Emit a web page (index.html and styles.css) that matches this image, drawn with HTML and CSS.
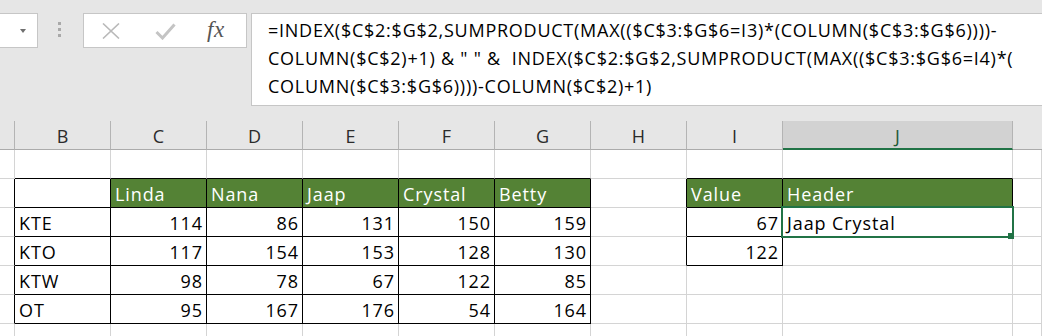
FILE: index.html
```html
<!DOCTYPE html>
<html>
<head>
<meta charset="utf-8">
<link rel="stylesheet" href="styles.css">
</head>
<body>
<div class="app">
  <div class="top">
    <div class="namebox"><span class="caret"></span></div>
    <div class="grip"><i></i><i></i><i></i></div>
    <div class="fbtns">
      <svg class="ic-x" width="18" height="16" viewBox="0 0 18 16"><path d="M1 0.5 L17 15.5 M17 0.5 L1 15.5" stroke="#b9b9b9" stroke-width="1.6" fill="none"/></svg>
      <svg class="ic-ok" width="21" height="17" viewBox="0 0 21 17"><path d="M1.5 9 L7.5 15 L19.5 1.5" stroke="#c4c4c4" stroke-width="3" fill="none"/></svg>
      <span class="fx">fx</span>
    </div>
    <div class="formula">
      <span class="fl">=INDEX($C$2:$G$2,SUMPRODUCT(MAX(($C$3:$G$6=I3)*(COLUMN($C$3:$G$6))))-</span>
      <span class="fl">COLUMN($C$2)+1) &amp; " " &amp;  INDEX($C$2:$G$2,SUMPRODUCT(MAX(($C$3:$G$6=I4)*(</span>
      <span class="fl">COLUMN($C$3:$G$6))))-COLUMN($C$2)+1)</span>
    </div>
  </div>
  <div class="sheet">
    <div class="c h"></div><div class="c h">B</div><div class="c h">C</div><div class="c h">D</div><div class="c h">E</div><div class="c h">F</div><div class="c h">G</div><div class="c h">H</div><div class="c h">I</div><div class="c h hsel">J</div><div class="c h hk"></div>

    <div class="c"></div><div class="c bb"></div><div class="c bb"></div><div class="c bb"></div><div class="c bb"></div><div class="c bb"></div><div class="c bb"></div><div class="c"></div><div class="c bb"></div><div class="c bb"></div><div class="c"></div>

    <div class="c br"></div><div class="c br bb"></div><div class="c br bb g">Linda</div><div class="c br bb g">Nana</div><div class="c br bb g">Jaap</div><div class="c br bb g">Crystal</div><div class="c br bb g">Betty</div><div class="c br"></div><div class="c br bb g">Value</div><div class="c br bb g">Header</div><div class="c"></div>

    <div class="c br"></div><div class="c br bb">KTE</div><div class="c br bb n">114</div><div class="c br bb n">86</div><div class="c br bb n">131</div><div class="c br bb n">150</div><div class="c br bb n">159</div><div class="c br"></div><div class="c br bb n">67</div><div class="c br bb sel">Jaap Crystal</div><div class="c"></div>

    <div class="c br"></div><div class="c br bb">KTO</div><div class="c br bb n">117</div><div class="c br bb n">154</div><div class="c br bb n">153</div><div class="c br bb n">128</div><div class="c br bb n">130</div><div class="c br"></div><div class="c br bb n">122</div><div class="c"></div><div class="c"></div>

    <div class="c br"></div><div class="c br bb">KTW</div><div class="c br bb n">98</div><div class="c br bb n">78</div><div class="c br bb n">67</div><div class="c br bb n">122</div><div class="c br bb n">85</div><div class="c"></div><div class="c"></div><div class="c"></div><div class="c"></div>

    <div class="c br"></div><div class="c br bb">OT</div><div class="c br bb n">95</div><div class="c br bb n">167</div><div class="c br bb n">176</div><div class="c br bb n">54</div><div class="c br bb n">164</div><div class="c"></div><div class="c"></div><div class="c"></div><div class="c"></div>

    <div class="c"></div><div class="c"></div><div class="c"></div><div class="c"></div><div class="c"></div><div class="c"></div><div class="c"></div><div class="c"></div><div class="c"></div><div class="c"></div><div class="c"></div>
  </div>
</div>
</body>
</html>
```

FILE: styles.css
```css
html, body {
  margin: 0;
  padding: 0;
  background: #ffffff;
}
.app {
  width: 1042px;
  height: 336px;
  overflow: hidden;
  font-family: "Open Sans", "Noto Sans", sans-serif;
}
.top {
  height: 121px;
  box-sizing: border-box;
  padding-top: 13px;
  background: #e6e6e6;
  display: flex;
  align-items: flex-start;
}
.namebox {
  width: 38px;
  height: 35px;
  box-sizing: border-box;
  background: #fff;
  border: 1px solid #c6c6c6;
  border-left: none;
  display: flex;
  align-items: center;
  justify-content: flex-end;
  padding-right: 11px;
}
.caret {
  width: 0;
  height: 0;
  border-left: 3.5px solid transparent;
  border-right: 3.5px solid transparent;
  border-top: 4px solid #6f6f6f;
  margin-top: 1px;
}
.grip {
  margin-left: 20px;
  margin-top: 9px;
  display: flex;
  flex-direction: column;
  gap: 3px;
}
.grip i {
  display: block;
  width: 3px;
  height: 3px;
  background: #a9a9a9;
}
.fbtns {
  margin-left: 22px;
  width: 164px;
  height: 35px;
  box-sizing: border-box;
  background: #fff;
  border: 1px solid #c6c6c6;
  display: flex;
  align-items: center;
  padding-left: 18px;
}
.ic-x {
  margin-top: 1px;
}
.ic-ok {
  margin-left: 35px;
  margin-top: 2px;
}
.fx {
  margin-left: 31px;
  font-family: "Liberation Serif", "DejaVu Serif", serif;
  font-style: italic;
  font-size: 23px;
  color: #555555;
  letter-spacing: 0.5px;
  margin-top: -2px;
}
.formula {
  margin-left: 4px;
  flex: 1;
  height: 93px;
  box-sizing: border-box;
  background: #fff;
  border: 1px solid #c6c6c6;
  border-right: none;
  padding: 2px 0 0 16px;
  font-size: 18px;
  line-height: 28px;
  letter-spacing: 0.75px;
  color: #000;
}
.fl {
  display: block;
  white-space: pre;
}
.sheet {
  display: grid;
  grid-template-columns: 15px repeat(8, 96px) 230px 1fr;
  grid-auto-rows: 29px;
}
.c {
  box-sizing: border-box;
  border-right: 1px solid #d4d4d4;
  border-bottom: 1px solid #d4d4d4;
  padding: 3px 4px 0 4px;
  font-size: 18px;
  line-height: 24px;
  letter-spacing: 0.9px;
  white-space: nowrap;
  overflow: hidden;
  color: #000;
}
.n {
  text-align: right;
  padding-right: 3px;
}
.h {
  background: #e6e6e6;
  border-right-color: #b4b4b4;
  border-bottom-color: #ababab;
  text-align: center;
  color: #2b2b2b;
  letter-spacing: 0;
}
.hk {
  border-right: none;
}
.hsel {
  background: #d2d2d2;
  border-bottom: 2px solid #217346;
  color: #1f5a36;
}
.bb {
  border-bottom-color: #000;
}
.br {
  border-right-color: #000;
}
.g {
  background: #548235;
  color: #fff;
}
.sel {
  position: relative;
  overflow: visible;
}
.sel::before {
  content: "";
  position: absolute;
  left: -2px;
  top: -2px;
  width: 233px;
  height: 32px;
  box-sizing: border-box;
  border: 2px solid #217346;
  z-index: 1;
}
.sel::after {
  content: "";
  position: absolute;
  left: 225px;
  top: 25px;
  width: 6px;
  height: 6px;
  background: #217346;
  z-index: 2;
}
```
